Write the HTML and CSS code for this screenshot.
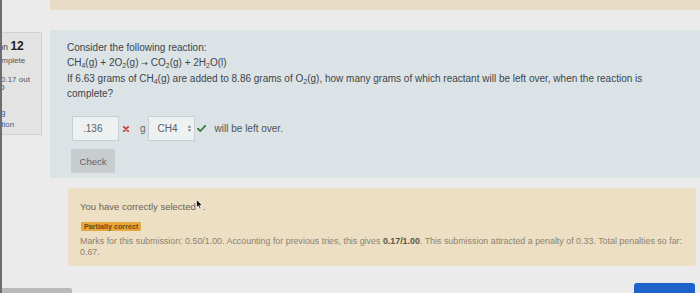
FILE: index.html
```html
<!DOCTYPE html>
<html>
<head>
<meta charset="utf-8">
<link rel="stylesheet" href="styles.css">
</head>
<body>
<div class="row">
  <aside class="info">
    <div class="qno"><span class="qword">Question </span><b>12</b></div>
    <div class="state">Complete</div>
    <div class="grade">Mark 0.17 out</div>
    <div class="grade2">of 1.00</div>
    <div class="flag">Flag</div>
    <div class="flag2">question</div>
  </aside>
  <main class="col">
    <div class="strip"></div>
    <section class="que">
      <p class="qtext">Consider the following reaction:<br>
      CH<sub>4</sub>(g) + 2O<sub>2</sub>(g) <span class="arrow">→</span> CO<sub>2</sub>(g) + 2H<sub>2</sub>O(l)<br>
      If 6.63 grams of CH<sub>4</sub>(g) are added to 8.86 grams of O<sub>2</sub>(g), how many grams of which reactant will be left over, when the reaction is complete?</p>
      <div class="answer">
        <span class="inp">.136</span>
        <svg class="cross" width="6" height="6" viewBox="0 0 6 6"><path d="M0.8 0.8 L5.2 5.2 M5.2 0.8 L0.8 5.2" stroke="#c93a35" stroke-width="1.7" stroke-linecap="round"/></svg>
        <span class="unit">g</span>
        <span class="sel">CH4<svg class="arr" width="5" height="7" viewBox="0 0 5 7"><path d="M2.5 0.5 L4.3 2.6 L0.7 2.6 Z M2.5 6.5 L4.3 4.4 L0.7 4.4 Z" fill="#666"/></svg></span>
        <svg class="tick" width="9" height="7" viewBox="0 0 9 7"><path d="M0.9 3.6 L3.3 6 L8.2 0.9" stroke="#3c7a3b" stroke-width="1.8" fill="none" stroke-linecap="round" stroke-linejoin="round"/></svg>
        <span class="tail">will be left over.</span>
      </div>
      <button class="check">Check</button>
    </section>
    <section class="feedback">
      <div class="fb">You have correctly selected<svg class="cursor" width="7" height="11" viewBox="0 0 7 11"><path d="M0.5 0.5 L0.5 8.6 L2.4 6.9 L3.7 10 L5 9.4 L3.8 6.5 L6.3 6.4 Z" fill="#111" stroke="#fff" stroke-width="0.7"/></svg>.</div>
      <div class="badge">Partially correct</div>
      <p class="marks">Marks for this submission: 0.50/1.00. Accounting for previous tries, this gives <b>0.17/1.00</b>. This submission attracted a penalty of 0.33. Total penalties so far: 0.67.</p>
    </section>
  </main>
</div>
<div class="bottom">
  <span class="prev"></span>
  <span class="next">Next page</span>
</div>
</body>
</html>
```

FILE: styles.css
```css
html, body {
  margin: 0;
  padding: 0;
}
body {
  width: 698px;
  height: 293px;
  overflow: hidden;
  background: #ebebeb;
  border-left: 2px solid #6e6e6e;
  font-family: "Liberation Sans", Arial, "DejaVu Sans", sans-serif;
  display: flex;
  flex-direction: column;
}
.row {
  display: flex;
  gap: 8px;
}
.info {
  width: 40px;
  flex: none;
  margin-top: 32px;
  height: 103px;
  box-sizing: border-box;
  background: #e3e3e3;
  border: 1px solid #d2d2d2;
  border-left: none;
  overflow: hidden;
  font-size: 8px;
  color: #555;
  line-height: 8px;
  white-space: nowrap;
}
.qno {
  margin-top: 6px;
  margin-left: -28px;
  font-size: 8.5px;
  line-height: 14px;
  color: #444;
}
.qno b {
  font-size: 12px;
  color: #222;
}
.state {
  margin-top: 3px;
  margin-left: -11px;
}
.grade {
  margin-top: 11px;
  margin-left: -21px;
}
.grade2 {
  margin-top: 0;
  margin-left: -22px;
  color: #333;
}
.flag {
  margin-top: 17px;
  margin-left: -12px;
  color: #3b5d9e;
}
.flag2 {
  margin-top: 4px;
  margin-left: -18px;
  color: #3b5d9e;
}
.col {
  flex: 1;
  display: flex;
  flex-direction: column;
}
.strip {
  height: 10px;
  background: #e8dcc7;
  margin-bottom: 20px;
}
.que {
  height: 148px;
  box-sizing: border-box;
  background: #dbe3e6;
  padding: 10px 20px 0 17px;
}
.qtext {
  margin: 0;
  font-size: 10px;
  line-height: 15px;
  color: #3e4448;
}
.arrow {
  font-family: "DejaVu Sans", sans-serif;
  font-size: 8px;
}
sub {
  font-size: 7px;
  line-height: 0;
  vertical-align: -2px;
}
.answer {
  display: flex;
  align-items: center;
  margin: 15px 0 0 5px;
  font-size: 10px;
  color: #4a4f53;
}
.inp {
  width: 47px;
  height: 25px;
  box-sizing: border-box;
  border: 1px solid #c9cfd2;
  background: #eef1f2;
  padding-left: 10px;
  display: flex;
  align-items: center;
  color: #5a5f63;
}
.cross {
  margin-left: 4px;
}
.unit {
  margin-left: 11px;
  color: #666;
}
.sel {
  margin-left: 2px;
  width: 47px;
  height: 25px;
  box-sizing: border-box;
  border: 1px solid #c9cfd2;
  background: #eef1f2;
  padding-left: 9px;
  display: flex;
  align-items: center;
  color: #555a5e;
}
.arr {
  margin-left: 9px;
}
.tick {
  margin-left: 2px;
}
.tail {
  margin-left: 9px;
  color: #4e5357;
}
.check {
  display: block;
  margin: 8px 0 0 4px;
  width: 44px;
  height: 24px;
  border: none;
  border-radius: 2px;
  background: #c8cccf;
  color: #5f6467;
  font-family: "Liberation Sans", Arial, sans-serif;
  font-size: 9.5px;
  padding: 0;
}
.feedback {
  margin: 10px 4px 0 18px;
  height: 78px;
  box-sizing: border-box;
  background: #ecdfc4;
  border-radius: 3px;
  padding: 13px 12px 0 12px;
}
.fb {
  font-size: 9.5px;
  line-height: 12px;
  color: #6a6357;
  display: flex;
  align-items: flex-start;
}
.cursor {
  margin-top: -2px;
}
.badge {
  display: inline-block;
  margin-top: 9px;
  margin-left: 1px;
  padding: 0 3px;
  height: 9px;
  line-height: 9px;
  background: #e8a63f;
  color: #6b4a12;
  font-size: 7.2px;
  font-weight: bold;
  border-radius: 1px;
}
.marks {
  margin: 3px 0 0 0;
  font-size: 8.9px;
  line-height: 11px;
  color: #8c826f;
}
.marks b {
  color: #5c5446;
}
.bottom {
  display: flex;
  justify-content: space-between;
  align-items: flex-start;
  margin-top: 17px;
  height: 10px;
}
.prev {
  margin-top: 5px;
  margin-left: -2px;
  width: 72px;
  height: 10px;
  background: #bababa;
  border-radius: 2px;
}
.next {
  margin-right: 5px;
  width: 61px;
  height: 16px;
  background: #1d63c9;
  border-radius: 3px;
  color: #fff;
  font-size: 8px;
  line-height: 14px;
  text-align: center;
  padding-top: 6px;
  box-sizing: border-box;
}
```
